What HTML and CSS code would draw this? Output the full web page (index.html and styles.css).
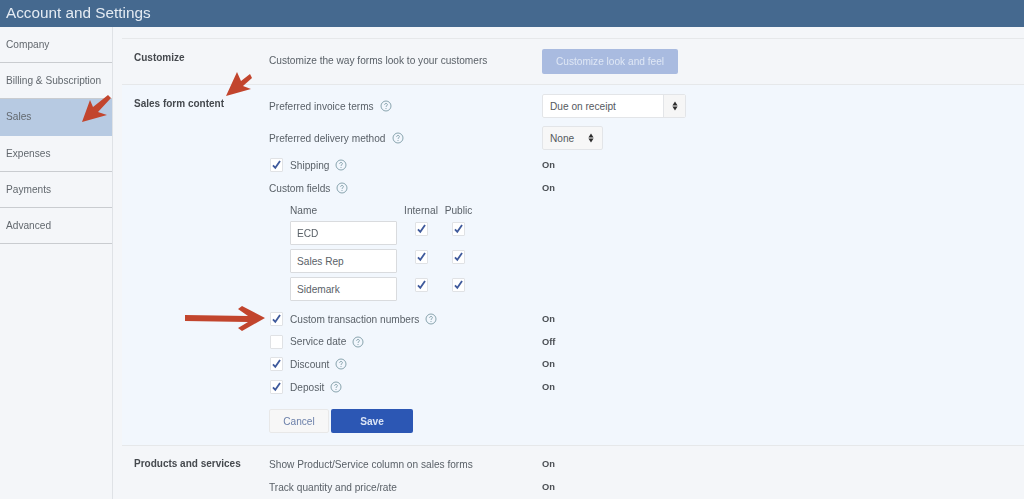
FILE: index.html
```html
<!DOCTYPE html>
<html lang="en">
<head>
<meta charset="utf-8">
<title>Account and Settings</title>
<link rel="stylesheet" href="styles.css">
</head>
<body>
<svg width="0" height="0" class="defs">
  <symbol id="help" viewBox="0 0 12 12"><circle cx="6" cy="6" r="5" fill="none" stroke="#6f8f9a" stroke-width="0.8"/><path d="M4.600 4.800c0-1.800 2.800-1.800 2.800-.1 0 1.100-1.400 1-1.400 2.200" fill="none" stroke="#6f8f9a" stroke-width="0.8"/><circle cx="6" cy="8.600" r="0.5" fill="#6f8f9a"/></symbol>
  <symbol id="tick" viewBox="0 0 14 14"><path d="M2.500 7.400l3 3.200L11.500 2" fill="none" stroke="#3f5a9c" stroke-width="2.300"/></symbol>
  <symbol id="updown" viewBox="0 0 6 10"><path d="M3 .5l2.600 3.900H.4zM3 9.500L.4 5.600h5.200z" fill="#2e2e2e"/></symbol>
</svg>
<header class="topbar">Account and Settings</header>
<div class="layout">
  <nav class="sidebar">
    <a class="nav-item">Company</a>
    <a class="nav-item">Billing &amp; Subscription</a>
    <a class="nav-item active">Sales</a>
    <a class="nav-item">Expenses</a>
    <a class="nav-item">Payments</a>
    <a class="nav-item">Advanced</a>
  </nav>
  <main class="content">
    <section class="section customize">
      <h2 class="section-title">Customize</h2>
      <div class="row row-customize">
        <div class="cell-left">Customize the way forms look to your customers</div>
        <button class="btn-look">Customize look and feel</button>
      </div>
    </section>
    <section class="section sales">
      <h2 class="section-title">Sales form content</h2>
      <div class="rows">
        <div class="row row-invoice">
          <div class="cell-left">Preferred invoice terms <svg class="help"><use href="#help"/></svg></div>
          <div class="select select-wide"><span class="select-text">Due on receipt</span><span class="select-caret"><svg class="updown"><use href="#updown"/></svg></span></div>
        </div>
        <div class="row row-delivery">
          <div class="cell-left">Preferred delivery method <svg class="help"><use href="#help"/></svg></div>
          <div class="select select-small"><span class="select-text">None</span><svg class="updown"><use href="#updown"/></svg></div>
        </div>
        <div class="row row-shipping">
          <div class="cell-left"><span class="check"><svg><use href="#tick"/></svg></span>Shipping <svg class="help"><use href="#help"/></svg></div>
          <div class="state">On</div>
        </div>
        <div class="row row-fields">
          <div class="cell-left">Custom fields <svg class="help"><use href="#help"/></svg></div>
          <div class="state">On</div>
        </div>
        <div class="fields">
          <span class="fields-head">Name</span><span class="fields-head">Internal</span><span class="fields-head">Public</span>
          <div class="input">ECD</div><span class="check small"><svg><use href="#tick"/></svg></span><span class="check small"><svg><use href="#tick"/></svg></span>
          <div class="input">Sales Rep</div><span class="check small"><svg><use href="#tick"/></svg></span><span class="check small"><svg><use href="#tick"/></svg></span>
          <div class="input">Sidemark</div><span class="check small"><svg><use href="#tick"/></svg></span><span class="check small"><svg><use href="#tick"/></svg></span>
        </div>
        <div class="row row-opt">
          <div class="cell-left"><span class="check"><svg><use href="#tick"/></svg></span>Custom transaction numbers <svg class="help"><use href="#help"/></svg></div>
          <div class="state">On</div>
        </div>
        <div class="row row-opt">
          <div class="cell-left"><span class="check"></span>Service date <svg class="help"><use href="#help"/></svg></div>
          <div class="state">Off</div>
        </div>
        <div class="row row-opt">
          <div class="cell-left"><span class="check"><svg><use href="#tick"/></svg></span>Discount <svg class="help"><use href="#help"/></svg></div>
          <div class="state">On</div>
        </div>
        <div class="row row-opt">
          <div class="cell-left"><span class="check"><svg><use href="#tick"/></svg></span>Deposit <svg class="help"><use href="#help"/></svg></div>
          <div class="state">On</div>
        </div>
        <div class="actions">
          <button class="btn-cancel">Cancel</button>
          <button class="btn-save">Save</button>
        </div>
      </div>
    </section>
    <section class="section products">
      <h2 class="section-title">Products and services</h2>
      <div class="rows">
        <div class="row row-plain">
          <div class="cell-left">Show Product/Service column on sales forms</div>
          <div class="state">On</div>
        </div>
        <div class="row row-plain">
          <div class="cell-left">Track quantity and price/rate</div>
          <div class="state">On</div>
        </div>
      </div>
    </section>
  </main>
</div>
<svg class="arrows" width="1024" height="499" viewBox="0 0 1024 499" aria-hidden="true">
  <g fill="#c2452d">
    <path d="M82 122L90 100L93 107L108 95L111 98L98 112L107 115Z"/>
    <path d="M226 96L237 72L241 81L250 74L252 78L243 86L251 89Z"/>
    <path d="M185 315L248 316L238 309L242 306L265 318L242 331L238 328L248 322L185 321Z"/>
  </g>
</svg>
</body>
</html>
```
FILE: styles.css
```css
* { box-sizing: border-box; }
html, body { margin: 0; height: 499px; overflow: hidden; }
body {
  position: relative;
  background: #f4f6f9;
  font-family: "Liberation Sans", Arial, sans-serif;
  font-size: 10.15px;
  color: #5a6168;
  filter: blur(0.35px);
}
.defs { position: absolute; }
.topbar {
  height: 27px;
  padding: 0 6px;
  background: #45698f;
  color: #e4ebf3;
  font-size: 15.3px;
  line-height: 25px;
}
.layout { display: flex; height: 472px; }
.sidebar {
  width: 113px;
  flex: none;
  border-right: 1px solid #dfe2e6;
}
.nav-item {
  display: block;
  height: 36.2px;
  padding-left: 6px;
  line-height: 36px;
  border-bottom: 1px solid #c9ccd0;
  color: #62686e;
}
.nav-item.active { background: #b7cae2; border-bottom-color: #b7cae2; }
.content { flex: 1; padding: 11px 0 0 9px; }
.section { display: flex; padding-left: 12px; border-top: 1px solid #e6e8ea; }
.section-title {
  width: 135px;
  flex: none;
  margin: 0;
  padding-top: 1px;
  font-size: 10px;
  font-weight: bold;
  color: #45494e;
}
.customize { height: 46px; padding-top: 12px; }
.row { display: flex; align-items: center; }
.cell-left { width: 273px; flex: none; display: flex; align-items: center; }
.row-customize { height: 23px; margin-top: -1px; }
.row-customize .cell-left { margin-top: -2px; }
.btn-look {
  width: 136px;
  height: 25px;
  border: 0;
  border-radius: 2px;
  background: #a9bbe0;
  color: #dfe7f5;
  font: 10.15px "Liberation Sans", Arial, sans-serif;
  padding: 0;
}
.sales { height: 361px; background: #f2f7fd; padding-top: 12px; }
.rows { flex: 1; display: flex; flex-direction: column; }
.row-invoice { height: 24px; margin-top: -3px; }
.row-delivery { height: 24px; margin-top: 8px; }
.row-shipping { height: 16px; margin-top: 7px; }
.row-fields { height: 16px; margin-top: 7px; }
.row-opt { height: 16px; margin-bottom: 6.7px; }
.row-plain { height: 16px; margin-bottom: 7px; }
.select {
  display: flex;
  align-items: center;
  background: #fff;
  border: 1px solid #e3e5e8;
  border-radius: 2px;
  height: 24px;
  color: #55595e;
}
.select-wide { width: 144px; padding-left: 7px; }
.select-text { flex: 1; }
.select-caret {
  width: 22px;
  height: 22px;
  display: flex;
  align-items: center;
  justify-content: center;
  border-left: 1px solid #e3e5e8;
  background: #f6f6f6;
}
.select-small { width: 61px; padding: 0 8px 0 7px; background: #f7f7f7; }
.updown { width: 6px; height: 10px; }
.help { width: 12px; height: 12px; margin-left: 6px; flex: none; }
.state { font-weight: bold; font-size: 9.3px; color: #4b4f54; }
.check {
  width: 13px;
  height: 14px;
  margin-right: 7px;
  flex: none;
  background: #fff;
  border: 1px solid #e0e2e5;
  border-radius: 1px;
  display: inline-flex;
}
.check svg { width: 12px; height: 12px; }
.check:first-child { margin-left: 1px; }
.fields {
  display: grid;
  grid-template-columns: 107px 34px 27px;
  column-gap: 7px;
  grid-template-rows: 18px 28px 28px 28px;
  align-items: center;
  justify-items: center;
  margin: 5px 0 0 21px;
  height: 110px;
}
.fields .input {
  width: 107px;
  height: 24px;
  padding-left: 6px;
  line-height: 23px;
  background: #fff;
  border: 1px solid #d9dbde;
  border-radius: 1px;
}
.fields-head:first-child { justify-self: start; }
.check.small { margin: 0 0 8px; }
.actions { display: flex; gap: 2px; margin-top: 7.300px; }
.btn-cancel, .btn-save {
  height: 24px;
  border-radius: 2px;
  font: 10.15px "Liberation Sans", Arial, sans-serif;
  padding: 0;
}
.btn-cancel { width: 60px; background: #f7f7f7; border: 1px solid #e8e8e8; color: #6c80aa; }
.btn-save { width: 82px; background: #2c57b4; border: 0; color: #dbe4f5; font-weight: bold; }
.products { padding-top: 10px; }
.products .section-title { padding-top: 2px; }
.arrows { position: absolute; left: 0; top: 0; pointer-events: none; }
```
